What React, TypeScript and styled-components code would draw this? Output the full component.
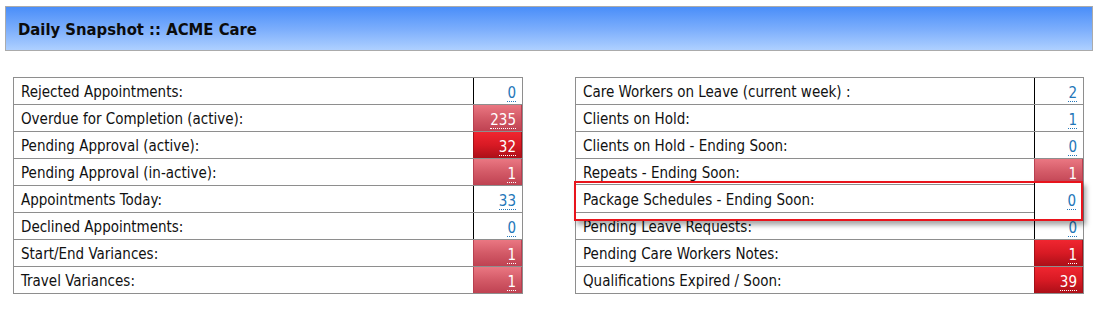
import React from "react";
import styled, { createGlobalStyle, css } from "styled-components";

const GlobalStyle = createGlobalStyle`
  html, body { margin: 0; padding: 0; background: #ffffff; }
  body {
    font-family: "DejaVu Sans Condensed", "DejaVu Sans", sans-serif;
    font-stretch: condensed;
    color: #111111;
  }
`;

const Page = styled.div`
  padding: 6px 12px 0 5px;
  width: 1105px;
  box-sizing: border-box;
`;

const Header = styled.div`
  height: 45px;
  border: 1px solid #ababab;
  background: linear-gradient(to bottom, #4a8ef9 0%, #7fb0fc 55%, #aed0ff 100%);
  display: flex;
  align-items: center;
  padding-left: 12px;
  padding-top: 1px;
  font-size: 16.5px;
  font-weight: bold;
  color: #0c0c0c;
  width: 1088px;
  box-sizing: border-box;
`;

const Columns = styled.div`
  display: grid;
  grid-template-columns: 510px 509px;
  column-gap: 52px;
  margin: 26px 0 0 8px;
`;

const TableWrap = styled.div`
  position: relative;
`;

const Table = styled.div`
  border: 1px solid #8e8e8e;
`;

const Row = styled.div`
  display: grid;
  grid-template-columns: 1fr 49px;
  height: 26px;
  & + & { border-top: 1px solid #8e8e8e; }
`;

const Label = styled.div`
  display: flex;
  align-items: center;
  padding: 1px 0 0 7px;
  font-size: 15px;
  white-space: nowrap;
`;

type Tone = "plain" | "warn" | "alert";

const Value = styled.div<{ $tone: Tone }>`
  display: flex;
  align-items: center;
  justify-content: flex-end;
  padding: 0 6px 0 0;
  font-size: 15px;
  border-left: 1px solid #000000;
  ${(p) =>
    p.$tone === "warn" &&
    css`
      border-left-color: #b84050;
      background: linear-gradient(to bottom, #ea7782 0%, #d35a67 50%, #bf4252 100%);
      box-shadow: inset -1px 0 0 #b84050;
    `}
  ${(p) =>
    p.$tone === "alert" &&
    css`
      border-left-color: #a41018;
      background: linear-gradient(to bottom, #f02630 0%, #d81a24 50%, #ac0f18 100%);
      box-shadow: inset -1px 0 0 #a41018;
    `}
`;

const Num = styled.span<{ $tone: Tone }>`
  color: ${(p) => (p.$tone === "plain" ? "#2376b8" : "#ffffff")};
  border-bottom: 1px dotted ${(p) => (p.$tone === "plain" ? "#2376b8" : "#ffffff")};
  line-height: 16px;
  margin-top: 4px;
`;

const Highlight = styled.div`
  position: absolute;
  left: -1px;
  top: 104px;
  width: 509px;
  height: 40px;
  box-sizing: border-box;
  border: 2px solid #e8141c;
  background: #ffffff;
  box-shadow: 3px 4px 5px rgba(0, 0, 0, 0.35);
  display: grid;
  grid-template-columns: 1fr 47px;
`;

const HighlightLabel = styled.div`
  margin-top: 1px;
  height: 29px;
  box-sizing: border-box;
  border-top: 1px solid #8e8e8e;
  border-bottom: 1px solid #8e8e8e;
  display: flex;
  align-items: center;
  padding: 3px 0 0 7px;
  font-size: 15px;
  white-space: nowrap;
`;

const HighlightValue = styled.div`
  border-left: 1px solid #000000;
  display: flex;
  align-items: flex-start;
  justify-content: flex-end;
  padding: 6px 5px 0 0;
  font-size: 15px;
`;

type Item = { label: string; value: string; tone: Tone };

const left: Item[] = [
  { label: "Rejected Appointments:", value: "0", tone: "plain" },
  { label: "Overdue for Completion (active):", value: "235", tone: "warn" },
  { label: "Pending Approval (active):", value: "32", tone: "alert" },
  { label: "Pending Approval (in-active):", value: "1", tone: "warn" },
  { label: "Appointments Today:", value: "33", tone: "plain" },
  { label: "Declined Appointments:", value: "0", tone: "plain" },
  { label: "Start/End Variances:", value: "1", tone: "warn" },
  { label: "Travel Variances:", value: "1", tone: "warn" },
];

const right: Item[] = [
  { label: "Care Workers on Leave (current week) :", value: "2", tone: "plain" },
  { label: "Clients on Hold:", value: "1", tone: "plain" },
  { label: "Clients on Hold - Ending Soon:", value: "0", tone: "plain" },
  { label: "Repeats - Ending Soon:", value: "1", tone: "warn" },
  { label: "Package Schedules - Ending Soon:", value: "0", tone: "plain" },
  { label: "Pending Leave Requests:", value: "0", tone: "plain" },
  { label: "Pending Care Workers Notes:", value: "1", tone: "alert" },
  { label: "Qualifications Expired / Soon:", value: "39", tone: "alert" },
];

const SnapshotTable = ({ items }: { items: Item[] }) => (
  <Table>
    {items.map((it) => (
      <Row key={it.label}>
        <Label>{it.label}</Label>
        <Value $tone={it.tone}>
          <Num $tone={it.tone}>{it.value}</Num>
        </Value>
      </Row>
    ))}
  </Table>
);

export default function App() {
  return (
    <>
      <GlobalStyle />
      <Page>
        <Header>Daily Snapshot :: ACME Care</Header>
        <Columns>
          <TableWrap>
            <SnapshotTable items={left} />
          </TableWrap>
          <TableWrap>
            <SnapshotTable items={right} />
            <Highlight>
              <HighlightLabel>Package Schedules - Ending Soon:</HighlightLabel>
              <HighlightValue>
                <Num $tone="plain">0</Num>
              </HighlightValue>
            </Highlight>
          </TableWrap>
        </Columns>
      </Page>
    </>
  );
}
